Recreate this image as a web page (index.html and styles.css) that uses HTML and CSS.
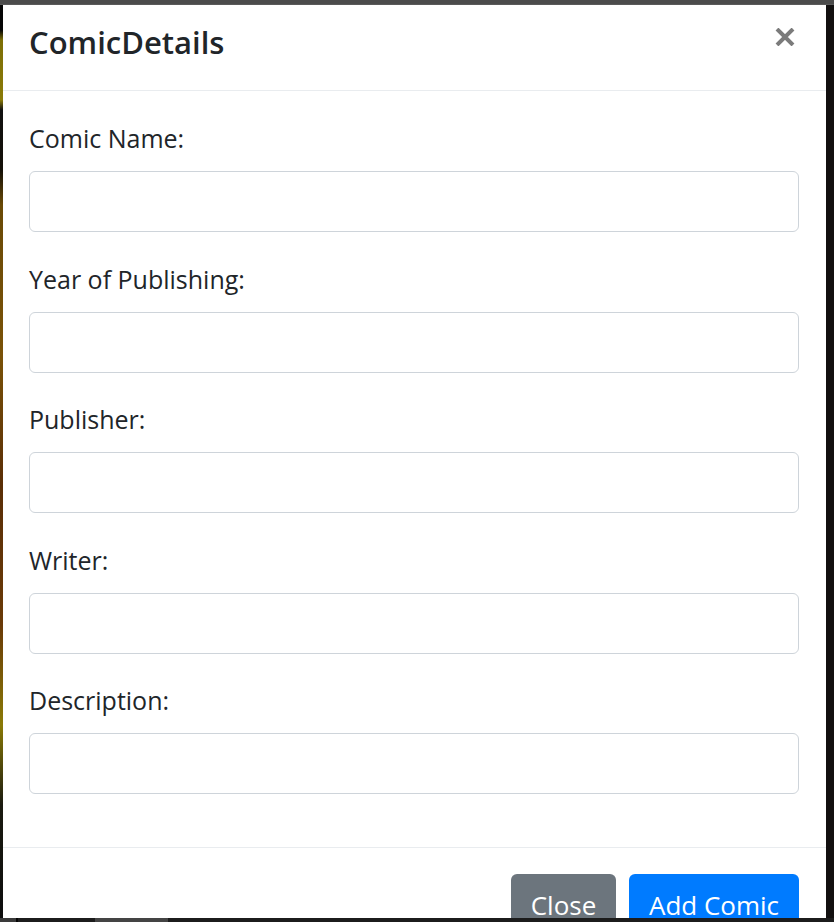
FILE: index.html
```html
<!DOCTYPE html>
<html>
<head>
<meta charset="utf-8">
<link rel="stylesheet" href="styles.css">
</head>
<body>
<div class="frame">
  <div class="topbar"></div>
  <div class="middle">
    <div class="leftstrip"></div>
    <div class="modal">
      <div class="modal-header">
        <h5 class="modal-title">ComicDetails</h5>
        <button class="close" type="button" aria-label="Close">
          <svg width="20" height="18" viewBox="0 0 20 18"><path d="M2 1 L18 17 M18 1 L2 17" stroke="#7b7b7b" stroke-width="4" stroke-linecap="butt"/></svg>
        </button>
      </div>
      <div class="modal-body">
        <div class="form-group"><label>Comic Name:</label><input class="form-control" type="text"></div>
        <div class="form-group"><label>Year of Publishing:</label><input class="form-control" type="text"></div>
        <div class="form-group"><label>Publisher:</label><input class="form-control" type="text"></div>
        <div class="form-group"><label>Writer:</label><input class="form-control" type="text"></div>
        <div class="form-group"><label>Description:</label><input class="form-control" type="text"></div>
      </div>
      <div class="modal-footer">
        <button class="btn btn-secondary" type="button">Close</button>
        <button class="btn btn-primary" type="button">Add Comic</button>
      </div>
    </div>
    <div class="rightstrip"></div>
  </div>
  <div class="bottombar">
    <div class="seg seg-a"></div>
    <div class="seg seg-b"></div>
    <div class="seg seg-c"></div>
    <div class="seg seg-d"></div>
    <div class="seg seg-e"></div>
  </div>
</div>
</body>
</html>
```

FILE: styles.css
```css
* { box-sizing: border-box; }
html, body { margin: 0; padding: 0; background: #111; }
body { font-family: "Open Sans", "Noto Sans", sans-serif; color: #212529; }
.frame { width: 834px; height: 922px; display: flex; flex-direction: column; overflow: hidden; }
.topbar { height: 5px; background: #4b4b4b; border-bottom: 1px solid #5a5a5a; flex: none; }
.middle { flex: 1; display: flex; min-height: 0; }
.leftstrip { width: 3px; flex: none; background: linear-gradient(#050505 0px, #050505 25px, #7d6f06 35px, #8a7a08 95px, #111 105px, #141008 165px, #6a4a06 200px, #7a5208 350px, #5a2e06 480px, #6a3a08 620px, #8a7a06 720px, #1a1a10 800px, #0d0d0d 913px); }
.rightstrip { width: 8px; flex: none; background: #121010; }
.modal { width: 823px; flex: none; background: #fff; display: flex; flex-direction: column; overflow: hidden; }
.modal-header { height: 86px; flex: none; display: flex; align-items: flex-start; justify-content: space-between; padding: 14px 29px 0 26px; border-bottom: 1px solid #e9ecef; }
.modal-title { margin: 0; font-size: 31px; font-weight: 600; line-height: 46px; color: #212529; }
.close { border: 0; background: transparent; padding: 0; margin: 7px 0 0 0; width: 24px; height: 22px; display: flex; align-items: center; justify-content: center; }
.modal-body { flex: none; height: 756px; padding: 28px 27px 0 26px; }
.form-group { margin-bottom: 27.5px; }
.form-group label { display: block; font-size: 25px; line-height: 38px; margin-bottom: 14px; color: #212529; }
.form-control { display: block; width: 100%; height: 61px; border: 1px solid #ced4da; border-radius: 6px; background: #fff; padding: 0 19px; font-family: inherit; font-size: 25px; }
.modal-footer { flex: none; border-top: 1px solid #e9ecef; display: flex; justify-content: flex-end; gap: 13px; padding: 26px 27px 0 0; }
.btn { border: 0; border-radius: 6px; color: #fff; font-family: inherit; font-size: 26px; line-height: 38px; padding: 10px 0; height: 62px; text-align: center; }
.btn-secondary { background: #6c757d; width: 105px; }
.btn-primary { background: #007bff; width: 170px; }
.bottombar { height: 4px; flex: none; display: flex; background: #1c1c1c; }
.seg-a { width: 16px; background: #3a3a3a; }
.seg-b { width: 2px; background: #050505; }
.seg-c { width: 77px; background: #1c1c1c; }
.seg-d { width: 73px; background: #444; }
.seg-e { flex: 1; background: #1c1c1c; }
```
